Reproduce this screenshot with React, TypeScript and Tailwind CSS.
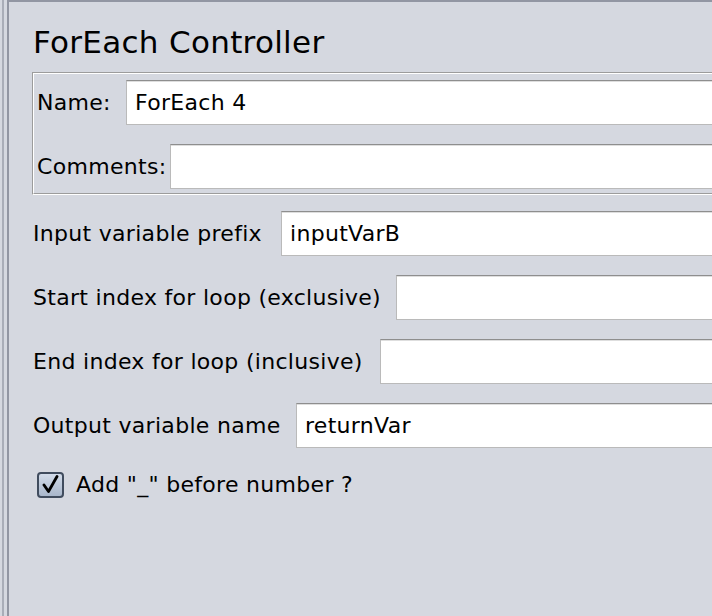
import React from 'react';

interface FieldRow {
  label: string;
  value: string;
  labelWidth: string;
}

const rows: FieldRow[] = [
  { label: 'Input variable prefix', value: 'inputVarB', labelWidth: 'w-[248px]' },
  { label: 'Start index for loop (exclusive)', value: '', labelWidth: 'w-[363px]' },
  { label: 'End index for loop (inclusive)', value: '', labelWidth: 'w-[347px]' },
  { label: 'Output variable name', value: 'returnVar', labelWidth: 'w-[263px]' },
];

const TextField: React.FC<{ value: string }> = ({ value }) => (
  <div className="flex-1 h-[45px] bg-white border border-[#bababa] border-t-[#8e8e8e] shadow-[inset_0_1px_0_#dedede] flex items-center pl-[8px] text-[22px] tracking-[0.3px] text-black whitespace-nowrap">
    {value}
  </div>
);

const CheckBox: React.FC = () => (
  <div className="w-[27px] h-[26px] rounded-[4px] border-2 border-[#404c5e] bg-gradient-to-b from-[#d3dcea] to-[#a9b7cb] flex items-center justify-center">
    <svg width="19" height="19" viewBox="0 0 19 19">
      <path d="M3 10 L7.5 16.5 L16 1.5" fill="none" stroke="#000" strokeWidth="2.8" strokeLinejoin="round" strokeLinecap="round" />
    </svg>
  </div>
);

const App: React.FC = () => {
  return (
    <div className="w-[712px] h-[616px] overflow-hidden bg-[#d5d8e0] flex pl-[2px] font-['DejaVu_Sans',sans-serif] text-black">
      <div className="flex border-l-2 border-[#a9adb8] pl-[3px]">
        <div className="w-[760px] shrink-0 border-l-2 border-t-2 border-[#9296a3] pt-[22px] pl-[23px]">
          <h1 className="pl-[1px] text-[31px] leading-[36px] tracking-[0.3px] font-normal whitespace-nowrap">ForEach Controller</h1>

          <div className="mt-[12px] border-t border-l border-[#9c9c9c] border-b border-r border-b-white border-r-white">
            <div className="border-t border-l border-white border-b border-r border-b-[#9c9c9c] border-r-[#9c9c9c] pt-[6px] pb-[4px] pl-[3px] flex flex-col gap-[19px]">
              <div className="flex items-center">
                <span className="w-[89px] text-[22px] tracking-[0.3px] whitespace-nowrap">Name:</span>
                <TextField value="ForEach 4" />
              </div>
              <div className="flex items-center">
                <span className="w-[133px] text-[22px] tracking-[0.3px] whitespace-nowrap">Comments:</span>
                <TextField value="" />
              </div>
            </div>
          </div>

          <div className="mt-[16px] flex flex-col gap-[19px] pl-[1px]">
            {rows.map((row) => (
              <div key={row.label} className="flex items-center">
                <span className={`${row.labelWidth} text-[22px] tracking-[0.3px] whitespace-nowrap`}>{row.label}</span>
                <TextField value={row.value} />
              </div>
            ))}
          </div>

          <div className="mt-[20px] ml-[5px] flex items-center gap-[12px]">
            <CheckBox />
            <span className="text-[22px] tracking-[0.3px] whitespace-nowrap">Add "_" before number ?</span>
          </div>
        </div>
      </div>
    </div>
  );
};

export default App;
